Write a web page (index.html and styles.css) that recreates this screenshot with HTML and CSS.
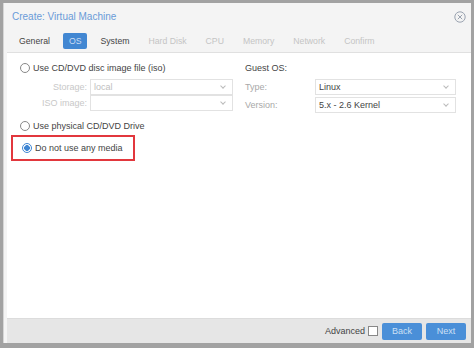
FILE: index.html
```html
<!DOCTYPE html>
<html>
<head>
<meta charset="utf-8">
<link rel="stylesheet" href="styles.css">
</head>
<body>
<div class="window">
  <div class="titlebar">
    <span class="title">Create: Virtual Machine</span>
    <svg class="close" width="12" height="12" viewBox="0 0 12 12"><circle cx="6" cy="6" r="5.2" fill="none" stroke="#9aa3b0" stroke-width="1"/><path d="M3.8 3.8 L8.2 8.2 M8.2 3.8 L3.8 8.2" stroke="#9aa3b0" stroke-width="1"/></svg>
  </div>
  <div class="tabs">
    <span class="tab">General</span>
    <span class="tab active">OS</span>
    <span class="tab">System</span>
    <span class="tab disabled">Hard Disk</span>
    <span class="tab disabled">CPU</span>
    <span class="tab disabled">Memory</span>
    <span class="tab disabled">Network</span>
    <span class="tab disabled">Confirm</span>
  </div>
  <div class="panel">
    <div class="col left">
      <label class="radio-row first"><span class="radio"></span>Use CD/DVD disc image file (iso)</label>
      <div class="field dim storage"><span class="flabel">Storage:</span><span class="combo">local<i class="chev"></i></span></div>
      <div class="field dim"><span class="flabel">ISO image:</span><span class="combo"><i class="chev"></i></span></div>
      <label class="radio-row physical"><span class="radio"></span>Use physical CD/DVD Drive</label>
      <div class="highlight">
        <label class="radio-row"><span class="radio checked"></span>Do not use any media</label>
      </div>
    </div>
    <div class="col right">
      <div class="heading">Guest OS:</div>
      <div class="field type"><span class="flabel">Type:</span><span class="combo">Linux<i class="chev"></i></span></div>
      <div class="field version"><span class="flabel">Version:</span><span class="combo">5.x - 2.6 Kernel<i class="chev"></i></span></div>
    </div>
  </div>
  <div class="footer">
    <span class="adv">Advanced</span>
    <span class="checkbox"></span>
    <button class="btn">Back</button>
    <button class="btn">Next</button>
  </div>
</div>
</body>
</html>
```
FILE: styles.css
```css
html, body { margin: 0; padding: 0; }
body {
  width: 474px; height: 348px;
  background: #a2a2a2;
  font-family: "Liberation Sans", Arial, sans-serif;
  font-size: 9px;
  color: #444;
  overflow: hidden;
}
.window {
  margin: 3px 3px 0 3px;
  height: 340px;
  background: #f4f4f4;
  border-left: 1px solid #d6d6d6;
  display: flex;
  flex-direction: column;
}
.titlebar {
  height: 26px;
  display: flex;
  align-items: center;
  justify-content: space-between;
  padding: 0 5px 0 8px;
}
.title { color: #6a9bd8; font-size: 10px; }
.close { margin-top: 2px; }
.tabs {
  height: 23px;
  display: flex;
  align-items: center;
  padding-left: 9px;
}
.tab {
  padding: 2px 6px;
  margin-right: 7px;
  color: #444;
  border-radius: 2px;
  line-height: 12px;
  font-size: 8.7px;
}
.tab.active { background: #4287d2; color: #c9ddf3; }
.tab.disabled { color: #c4c4c4; }
.panel {
  flex: 1;
  margin: 0 0 0 3px;
  background: #fff;
  border-top: 1px solid #e0e0e0;
  border-bottom: 1px solid #dcdcdc;
  display: flex;
  padding: 7px 0 0 9px;
}
.col { display: flex; flex-direction: column; }
.left { width: 222px; }
.right { margin-left: 7px; width: 212px; }
.radio-row {
  display: flex;
  align-items: center;
  height: 16px;
  color: #444;
}
.radio {
  width: 10px; height: 10px;
  border: 1px solid #888;
  border-radius: 50%;
  margin: 0 3px 0 4px;
  box-sizing: border-box;
  background: #fff;
}
.radio.checked {
  border-color: #3f86d3;
  background: radial-gradient(circle, #3f86d3 0 2.6px, #fff 3.1px);
}
.field { display: flex; align-items: center; height: 16px; }
.storage { margin-top: 3px; }
.physical { margin-top: 7px; }
.left .flabel { width: 74px; text-align: right; padding-right: 3px; box-sizing: border-box; }
.dim { color: #c8c8c8; }
.combo {
  position: relative;
  width: 143px; height: 16px;
  border: 1px solid #e2e2e2;
  box-sizing: border-box;
  padding-left: 3px;
  line-height: 14px;
  color: #444;
}
.dim .combo { color: #c0c0c0; }
.chev {
  position: absolute; right: 7px; top: 4px;
  width: 3px; height: 3px;
  border-right: 1px solid #bbb; border-bottom: 1px solid #bbb;
  transform: rotate(45deg);
}
.highlight {
  margin: 1px 0 0 -5px;
  width: 124px; height: 26px;
  border: 2px solid #e2373d;
  box-sizing: border-box;
  display: flex; align-items: center;
  padding-left: 5px;
}
.heading { height: 16px; line-height: 16px; color: #444; }
.right .flabel { width: 70px; color: #a8a8a8; }
.right .combo { width: 141px; }
.type { margin-top: 3px; }
.version { margin-top: 2px; }
.footer {
  height: 24px;
  background: #e6e6e6;
  display: flex;
  align-items: center;
  justify-content: flex-end;
  padding-right: 5px;
  margin-left: 3px;
}
.adv { color: #444; margin-right: 3px; }
.checkbox { width: 10px; height: 10px; border: 1px solid #888; background: #fff; box-sizing: border-box; margin-right: 0; }
.btn {
  font-family: inherit; font-size: 9px;
  background: #4a8fd8; color: #cde0f5;
  border: none; border-radius: 2px;
  width: 40px; height: 17px;
  margin-left: 4px; padding: 0;
}
```
